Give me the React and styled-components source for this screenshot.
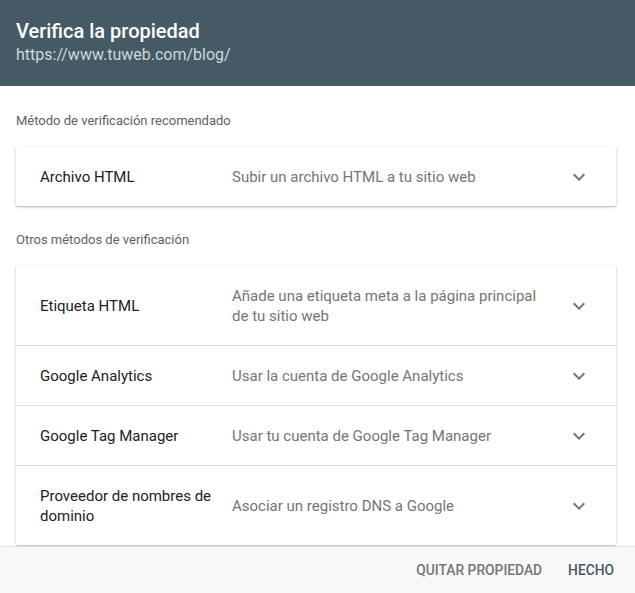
import React from "react";
import styled, { createGlobalStyle } from "styled-components";

const GlobalStyle = createGlobalStyle`
  html, body {
    margin: 0;
    padding: 0;
    height: 100%;
    background: #fff;
    font-family: Roboto, "Liberation Sans", Arial, sans-serif;
  }
  #root {
    height: 100%;
  }
`;

const recommended = [
  { title: "Archivo HTML", desc: "Subir un archivo HTML a tu sitio web" },
];

const others = [
  {
    title: "Etiqueta HTML",
    desc: "Añade una etiqueta meta a la página principal de tu sitio web",
  },
  { title: "Google Analytics", desc: "Usar la cuenta de Google Analytics" },
  { title: "Google Tag Manager", desc: "Usar tu cuenta de Google Tag Manager" },
  {
    title: "Proveedor de nombres de dominio",
    desc: "Asociar un registro DNS a Google",
  },
];

const Chevron = () => (
  <svg width="24" height="24" viewBox="0 0 24 24">
    <path d="M7.41 8.59 12 13.17l4.59-4.58L18 10l-6 6-6-6z" fill="#757575" />
  </svg>
);

const MethodRow = ({ title, desc }) => (
  <Row>
    <RowTitle>{title}</RowTitle>
    <RowDesc>{desc}</RowDesc>
    <Chevron />
  </Row>
);

const App = () => {
  return (
    <Dialog>
      <GlobalStyle />
      <Header>
        <h1>Verifica la propiedad</h1>
        <div className="url">https://www.tuweb.com/blog/</div>
      </Header>
      <Body>
        <Section>
          <Label>Método de verificación recomendado</Label>
          <Card>
            {recommended.map((m) => (
              <MethodRow key={m.title} {...m} />
            ))}
          </Card>
        </Section>
        <Section>
          <Label>Otros métodos de verificación</Label>
          <Card>
            {others.map((m) => (
              <MethodRow key={m.title} {...m} />
            ))}
          </Card>
        </Section>
      </Body>
      <Footer>
        <TextButton>Quitar propiedad</TextButton>
        <TextButton $primary>Hecho</TextButton>
      </Footer>
    </Dialog>
  );
};

export default App;

const Dialog = styled.div`
  height: 100vh;
  display: flex;
  flex-direction: column;
  overflow: hidden;
`;

const Header = styled.header`
  flex: none;
  height: 86px;
  box-sizing: border-box;
  background: #455a64;
  padding: 19px 16px 0;
  h1 {
    margin: 0;
    color: #fff;
    font-size: 20px;
    font-weight: 500;
    line-height: 25px;
  }
  .url {
    color: #cfd8dc;
    font-size: 16px;
    line-height: 22px;
  }
`;

const Body = styled.main`
  flex: 1;
  min-height: 0;
  overflow: hidden;
  padding: 25px 19px 0 16px;
  display: flex;
  flex-direction: column;
  gap: 24px;
`;

const Section = styled.section`
  display: flex;
  flex-direction: column;
  gap: 16px;
`;

const Label = styled.div`
  color: #616161;
  font-size: 13px;
  line-height: 20px;
  height: 20px;
`;

const Card = styled.div`
  background: #fff;
  border-radius: 2px;
  box-shadow: 0 1px 3px rgba(0, 0, 0, 0.25), 0 1px 1px rgba(0, 0, 0, 0.08);
  flex: none;
`;

const Row = styled.div`
  display: flex;
  align-items: center;
  padding: 20px 25px 19px 24px;
  & + & {
    border-top: 1px solid #e0e0e0;
  }
  svg {
    flex: none;
    margin: -2px 0;
  }
`;

const RowTitle = styled.div`
  width: 176px;
  flex: none;
  margin-right: 16px;
  color: #212121;
  font-size: 15px;
  line-height: 20px;
`;

const RowDesc = styled.div`
  flex: 1;
  padding-right: 28px;
  color: #757575;
  font-size: 15px;
  line-height: 20px;
`;

const Footer = styled.footer`
  flex: none;
  height: 47px;
  box-sizing: border-box;
  background: #f8f8f8;
  border-top: 1px solid #e0e0e0;
  display: flex;
  justify-content: flex-end;
  align-items: center;
  gap: 26px;
  padding: 0 21px 0 0;
`;

const TextButton = styled.button`
  border: none;
  background: none;
  padding: 0;
  font-family: inherit;
  font-size: 13.8px;
  font-weight: 500;
  text-transform: uppercase;
  color: ${(p) => (p.$primary ? "#455a64" : "#757575")};
  cursor: pointer;
`;
